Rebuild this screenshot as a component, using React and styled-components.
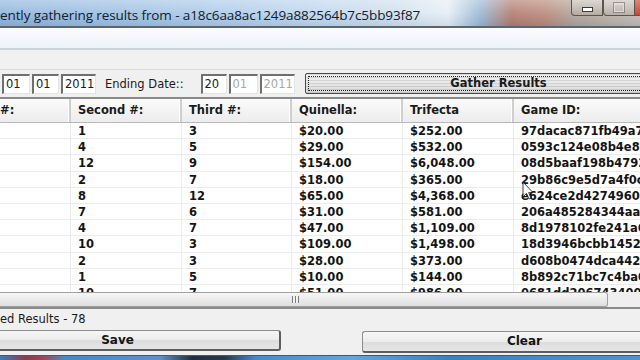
import React from "react";
import styled, { createGlobalStyle } from "styled-components";

const rows = [
  ["1", "3", "$20.00", "$252.00", "97dacac871fb49a7"],
  ["4", "5", "$29.00", "$532.00", "0593c124e08b4e8a"],
  ["12", "9", "$154.00", "$6,048.00", "08d5baaf198b4792"],
  ["2", "7", "$18.00", "$365.00", "29b86c9e5d7a4f0c"],
  ["8", "12", "$65.00", "$4,368.00", "e624ce2d4274960a"],
  ["7", "6", "$31.00", "$581.00", "206a485284344aa3"],
  ["4", "7", "$47.00", "$1,109.00", "8d1978102fe241a6"],
  ["10", "3", "$109.00", "$1,498.00", "18d3946bcbb14529"],
  ["2", "3", "$28.00", "$373.00", "d608b0474dca442e"],
  ["1", "5", "$10.00", "$144.00", "8b892c71bc7c4ba0"],
  ["10", "7", "$51.00", "$986.00", "0681dd206743400c"],
];

const App = () => {
  return (
    <>
      <GlobalStyle />
      <Screen>
        <TitleBar>
          <TitleText>ently gathering results from - a18c6aa8ac1249a882564b7c5bb93f87</TitleText>
          <WinButtons>
            <WinBtn>
              <MinGlyph />
            </WinBtn>
            <WinBtn>
              <MaxGlyph />
            </WinBtn>
            <WinBtn close />
          </WinButtons>
        </TitleBar>
        <MenuStrip />
        <Panel />
        <Controls>
          <DateBox w={28}>01</DateBox>
          <DateBox w={27}>01</DateBox>
          <DateBox w={35}>2011</DateBox>
          <Label>Ending Date::</Label>
          <DateBox w={26}>20</DateBox>
          <DateBox w={29} dim>
            01
          </DateBox>
          <DateBox w={35} dim>
            2011
          </DateBox>
          <GatherButton>
            <span>Gather Results</span>
          </GatherButton>
        </Controls>
        <Grid>
          <HeaderRow>
            <HeadCell first>#:</HeadCell>
            <HeadCell>Second #:</HeadCell>
            <HeadCell>Third #:</HeadCell>
            <HeadCell>Quinella:</HeadCell>
            <HeadCell>Trifecta</HeadCell>
            <HeadCell>Game ID:</HeadCell>
          </HeaderRow>
          <Body>
            {rows.map((r, i) => (
              <Row key={i}>
                <Cell first />
                {r.map((v, j) => (
                  <Cell key={j}>{v}</Cell>
                ))}
              </Row>
            ))}
          </Body>
          <HScroll>
            <Thumb>
              <Grip />
            </Thumb>
            <Corner />
          </HScroll>
        </Grid>
        <Status>ed Results - 78</Status>
        <ButtonRow>
          <BigButton>Save</BigButton>
          <BigButton>Clear</BigButton>
        </ButtonRow>
        <Taskbar />
        <Cursor viewBox="0 0 12 19">
          <path
            d="M1 1 L1 16 L4.5 12.5 L7 18 L9 17 L6.6 11.6 L11 11.6 Z"
            fill="#fff"
            stroke="#222"
            strokeWidth="1"
            strokeLinejoin="round"
          />
        </Cursor>
      </Screen>
    </>
  );
};

export default App;

const GlobalStyle = createGlobalStyle`
  body {
    margin: 0;
    overflow: hidden;
    background: #f0f0f0;
  }
`;

const Screen = styled.div`
  position: relative;
  width: 640px;
  height: 360px;
  overflow: hidden;
  display: flex;
  flex-direction: column;
  background: #f0f0f0;
  font-family: "DejaVu Sans", Tahoma, sans-serif;
`;

const TitleBar = styled.div`
  height: 26px;
  flex-shrink: 0;
  display: flex;
  align-items: flex-start;
  justify-content: space-between;
  border-bottom: 2px solid #5b6570;
  background: linear-gradient(
      180deg,
      rgba(255, 255, 255, 0.35) 0%,
      rgba(255, 255, 255, 0.1) 50%,
      rgba(0, 30, 80, 0.08) 100%
    ),
    linear-gradient(
      90deg,
      #8fb5dc 0%,
      #a3c4e5 25%,
      #b9d3ec 45%,
      #cfe0ef 62%,
      #e6eef5 70%,
      #9ab9d6 75%,
      #b27c6e 80%,
      #b98878 85%,
      #b0a49c 90%,
      #c2bab2 100%
    );
`;

const TitleText = styled.div`
  font-family: "Open Sans", "Noto Sans", sans-serif;
  font-size: 13.5px;
  color: #10202e;
  line-height: 26px;
  white-space: nowrap;
  padding-top: 2px;
  letter-spacing: -0.1px;
`;

const WinButtons = styled.div`
  display: flex;
  margin-right: -40px;
  margin-top: -1px;
`;

const WinBtn = styled.div`
  width: ${(p) => (p.close ? 44 : 30)}px;
  height: 16px;
  display: flex;
  align-items: center;
  justify-content: center;
  border: 1px solid #5a5550;
  border-top: none;
  border-left-width: ${(p) => (p.close ? 0 : 1)}px;
  border-radius: ${(p) => (p.close ? "0 0 4px 0" : "0 0 0 4px")};
  background: ${(p) =>
    p.close
      ? "linear-gradient(180deg, #e08a7a, #c24a36)"
      : "linear-gradient(180deg, rgba(230,225,220,0.7), rgba(180,170,160,0.6))"};
`;

const MinGlyph = styled.div`
  width: 9px;
  height: 3px;
  background: #fff;
  border: 1px solid #3a3a3a;
  margin-top: 4px;
`;

const MaxGlyph = styled.div`
  width: 8px;
  height: 6px;
  border: 1px solid #ddd;
  border-top-width: 2px;
  box-shadow: 0 0 0 1px rgba(60, 60, 60, 0.4);
`;

const MenuStrip = styled.div`
  height: 20px;
  flex-shrink: 0;
  background: linear-gradient(180deg, #fbfcfe, #eef2f8);
  border-bottom: 2px solid #cdd3dd;
`;

const Panel = styled.div`
  height: 19px;
  flex-shrink: 0;
  background: #f1f1f1;
  border-bottom: 1px solid #dcdcdc;
`;

const Controls = styled.div`
  height: 26px;
  flex-shrink: 0;
  display: flex;
  align-items: center;
  padding-left: 2px;
  gap: 2px;
  background: #f0f0f0;
  padding-top: 1px;
  box-sizing: border-box;
`;

const DateBox = styled.div`
  width: ${(p) => p.w}px;
  height: 20px;
  flex-shrink: 0;
  box-sizing: border-box;
  background: #fff;
  border: 1px solid #e3e3e3;
  border-top: 2px solid #6f6f6f;
  border-left: 2px solid #6f6f6f;
  font-size: 11.5px;
  color: ${(p) => (p.dim ? "#a8a8a8" : "#1a1a1a")};
  line-height: 17px;
  padding-left: 2px;
`;

const Label = styled.div`
  font-size: 11.5px;
  color: #1a1a1a;
  margin: 0 15px 0 7px;
  white-space: nowrap;
`;

const GatherButton = styled.div`
  flex-shrink: 0;
  margin-left: 8px;
  width: 388px;
  height: 21px;
  box-sizing: border-box;
  border: 1px solid #4a4a4a;
  border-radius: 2px;
  padding: 2px;
  background: repeating-linear-gradient(
      180deg,
      rgba(0, 0, 0, 0.1) 0px,
      rgba(0, 0, 0, 0.1) 1px,
      transparent 1px,
      transparent 3px
    ),
    linear-gradient(180deg, #f4f4f4, #dadada);
  span {
    display: block;
    height: 100%;
    box-sizing: border-box;
    border: 1px dotted #222;
    text-align: center;
    font-weight: bold;
    font-size: 11.5px;
    line-height: 13px;
    color: #1a1a1a;
  }
`;

const Grid = styled.div`
  flex-shrink: 0;
  margin-top: 1px;
  border-top: 2px solid #8a8a8a;
  background: #fff;
  display: flex;
  flex-direction: column;
`;

const HeaderRow = styled.div`
  display: flex;
  height: 23px;
  border-bottom: 1px solid #b9b9b9;
  background: linear-gradient(180deg, #fbfbfb, #ececec);
`;

const widths = [71, 111, 110, 111, 111, 200];

const HeadCell = styled.div`
  flex-shrink: 0;
  width: ${(p) => (p.first ? 71 : 111)}px;
  box-sizing: border-box;
  border-right: 2px solid #cfcfcf;
  box-shadow: inset -1px 0 0 #fff;
  padding-left: ${(p) => (p.first ? 0 : 7)}px;
  font-weight: bold;
  font-size: 11.5px;
  line-height: 23px;
  color: #1a1a1a;
  white-space: nowrap;
  &:nth-child(3) {
    width: 110px;
  }
  &:last-child {
    width: 200px;
  }
`;

const Body = styled.div`
  height: 169px;
  overflow: hidden;
`;

const Row = styled.div`
  display: flex;
  border-bottom: 1px solid #ececec;
  box-sizing: border-box;
  height: 16.2px;
`;

const Cell = styled.div`
  flex-shrink: 0;
  box-sizing: border-box;
  width: ${widths[1]}px;
  border-right: 1px solid #ececec;
  padding-left: 7px;
  font-weight: bold;
  font-size: 11.5px;
  line-height: 16px;
  color: #141414;
  white-space: nowrap;
  overflow: hidden;
  &:first-child {
    width: ${widths[0]}px;
  }
  &:nth-child(3) {
    width: ${widths[2]}px;
  }
  &:last-child {
    width: ${widths[5]}px;
  }
`;

const HScroll = styled.div`
  height: 15px;
  display: flex;
  background: #e9e9e9;
  border-bottom: 2px solid #8a8a8a;
`;

const Thumb = styled.div`
  width: 608px;
  box-sizing: border-box;
  border: 1px solid #a0a0a0;
  border-left: none;
  border-radius: 0 3px 3px 0;
  background: linear-gradient(180deg, #f7f7f7, #dedede);
  display: flex;
  align-items: center;
  justify-content: center;
`;

const Grip = styled.div`
  width: 7px;
  height: 7px;
  background: repeating-linear-gradient(
    90deg,
    #7a7a7a 0px,
    #7a7a7a 1px,
    #f2f2f2 1px,
    #f2f2f2 3px
  );
  margin-left: -16px;
`;

const Corner = styled.div`
  flex: 1;
  background: #efefef;
`;

const Status = styled.div`
  height: 21px;
  flex-shrink: 0;
  font-size: 11.5px;
  line-height: 21px;
  color: #1a1a1a;
  white-space: nowrap;
  background: #f0f0f0;
`;

const ButtonRow = styled.div`
  height: 25px;
  flex-shrink: 0;
  display: flex;
  gap: 81px;
  margin-left: -45px;
  box-sizing: border-box;
`;

const BigButton = styled.div`
  width: 326px;
  height: 21px;
  flex-shrink: 0;
  box-sizing: border-box;
  border: 1px solid #8c8c8c;
  border-right: 2px solid #5e5e5e;
  border-bottom: 2px solid #5e5e5e;
  border-radius: 3px;
  background: linear-gradient(180deg, #f6f6f6 0%, #ececec 50%, #dcdcdc 51%, #e6e6e6 100%);
  text-align: center;
  font-weight: bold;
  font-size: 12px;
  line-height: 18px;
  color: #141414;
  &:last-child {
    height: 22px;
    margin-top: 1px;
  }
`;

const Taskbar = styled.div`
  flex: 1;
  border-top: 1px solid #3c5a78;
  background: linear-gradient(
    90deg,
    #3d7cba 0%,
    #8a3c4e 4%,
    #9a4a5a 7%,
    #4e86c0 10%,
    #5d93c8 25%,
    #1f2f40 30%,
    #25384a 35%,
    #4a8ac4 40%,
    #6aa4d6 55%,
    #3f7fbe 70%,
    #5592cc 100%
  );
`;

const Cursor = styled.svg`
  position: absolute;
  left: 522px;
  top: 181px;
  width: 12px;
  height: 19px;
  opacity: 0.85;
`;
